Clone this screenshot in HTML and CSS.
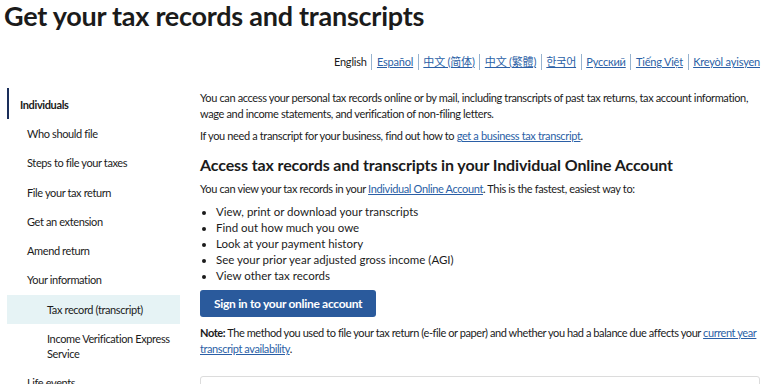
FILE: index.html
```html
<!DOCTYPE html>
<html lang="en">
<head>
<meta charset="utf-8">
<title>Get your tax records and transcripts</title>
<link rel="stylesheet" href="styles.css">
</head>
<body>
<h1 class="page-title">Get your tax records and transcripts</h1>
<nav class="lang-bar">
  <span class="lang current">English</span>
  <a class="lang" href="#">Español</a>
  <a class="lang" href="#">中文 (简体)</a>
  <a class="lang" href="#">中文 (繁體)</a>
  <a class="lang" href="#">한국어</a>
  <a class="lang" href="#">Русский</a>
  <a class="lang" href="#">Tiếng Việt</a>
  <a class="lang" href="#">Kreyòl ayisyen</a>
</nav>
<div class="layout">
  <aside class="sidenav">
    <div class="nav-item top">Individuals</div>
    <div class="nav-item lvl1">Who should file</div>
    <div class="nav-item lvl1">Steps to file your taxes</div>
    <div class="nav-item lvl1">File your tax return</div>
    <div class="nav-item lvl1">Get an extension</div>
    <div class="nav-item lvl1">Amend return</div>
    <div class="nav-item lvl1">Your information</div>
    <div class="nav-item lvl2 active">Tax record (transcript)</div>
    <div class="nav-item lvl2">Income Verification Express Service</div>
    <div class="nav-item lvl1">Life events</div>
  </aside>
  <main class="content">
    <p>You can access your personal tax records online or by mail, including transcripts of past tax returns, tax account information, wage and income statements, and verification of non-filing letters.</p>
    <p>If you need a transcript for your business, find out how to <a href="#">get a business tax transcript</a>.</p>
    <h2>Access tax records and transcripts in your Individual Online Account</h2>
    <p>You can view your tax records in your <a href="#">Individual Online Account</a>. This is the fastest, easiest way to:</p>
    <ul class="bullets">
      <li>View, print or download your transcripts</li>
      <li>Find out how much you owe</li>
      <li>Look at your payment history</li>
      <li>See your prior year adjusted gross income (AGI)</li>
      <li>View other tax records</li>
    </ul>
    <a class="btn" href="#">Sign in to your online account</a>
    <p class="note"><strong>Note:</strong> The method you used to file your tax return (e-file or paper) and whether you had a balance due affects your <a href="#">current year transcript availability</a>.</p>
    <div class="box"></div>
  </main>
</div>
</body>
</html>
```
FILE: styles.css
```css
* { box-sizing: border-box; }
body {
  margin: 0;
  font-family: Lato, "Noto Sans", "Noto Sans CJK SC", sans-serif;
  color: #1b1b1b;
  background: #fff;
}
a { color: #2b5fa6; }
.page-title {
  margin: 0;
  padding: 0 0 0 4px;
  font-size: 27px;
  line-height: 32px;
  font-weight: 700;
  letter-spacing: -0.25px;
}
.lang-bar {
  display: flex;
  justify-content: flex-end;
  padding: 22px 8px 0 0;
  font-size: 11px;
  line-height: 16px;
  letter-spacing: -0.2px;
}
.lang {
  padding: 0 4.6px;
  border-left: 1px solid #97b3cf;
}
.lang.current { border-left: none; }
.lang:last-child { padding-right: 0; }
.layout {
  display: flex;
  padding: 18px 0 0 7px;
}
.sidenav {
  width: 173px;
  flex: none;
  font-size: 11px;
  line-height: 15px;
  letter-spacing: -0.38px;
}
.nav-item {
  padding: 7px 0 7.3px 20px;
}
.nav-item.top {
  font-weight: 700;
  padding: 9px 0 7px 11px;
  border-left: 2px solid #1a2e5a;
}
.nav-item.lvl2 { padding-left: 40px; }
.nav-item.active { background: #e6f3f5; }
.content {
  margin-left: 20px;
  margin-top: 2px;
  width: 560px;
  font-size: 11px;
  line-height: 16px;
  letter-spacing: -0.36px;
}
.content p { margin: 0 0 6px; }
.content h2 {
  margin: 11px 0 6px;
  font-size: 16px;
  line-height: 20px;
  font-weight: 700;
  letter-spacing: -0.12px;
}
.bullets {
  margin: 7px 0 0;
  padding-left: 16px;
  font-size: 11.5px;
  letter-spacing: 0;
}
.btn {
  display: inline-block;
  margin-top: 5.5px;
  padding: 0 14px;
  height: 27px;
  line-height: 27px;
  background: #2a5a9c;
  color: #fff;
  font-weight: 700;
  text-decoration: none;
  border-radius: 3px;
  font-size: 12px;
  letter-spacing: -0.3px;
}
.content .note {
  margin-top: 8.5px;
  letter-spacing: -0.42px;
}
.box {
  margin-top: 19px;
  height: 40px;
  border: 1px solid #dcdcdc;
  border-radius: 3px;
}
```
